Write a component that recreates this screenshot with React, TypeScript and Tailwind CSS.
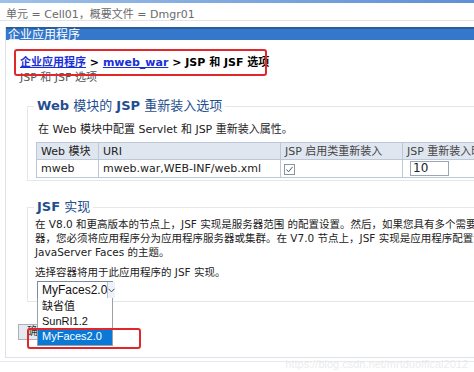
import React from 'react';

// WebSphere console: enterprise app > JSP and JSF options page

const font = "font-['DejaVu_Sans','Noto_Sans_CJK_SC',sans-serif]";

function Legend({ latin, cjk }: { latin: string[]; cjk: string[] }) {
  return (
    <legend className="ml-[6px] px-[3px] text-[13px] leading-[18px] text-[#1f4f8f]">
      {latin.map((l, i) => (
        <span key={i}>
          <span className="font-bold">{l}</span>
          {cjk[i] ? <span className="font-normal"> {cjk[i]}</span> : null}
          {i < latin.length - 1 ? ' ' : ''}
        </span>
      ))}
    </legend>
  );
}

export default function App() {
  return (
    <div className={`w-[474px] h-[372px] overflow-hidden bg-white relative ${font}`}>
      {/* top strip */}
      <div className="h-[3px] bg-gradient-to-r from-[#9fc0e8] to-[#5f90d4]" />
      <div className="h-[18px] pt-[6px] pl-[6px] text-[11px] leading-[12px] text-[#6a6a6a] whitespace-nowrap border-b border-[#dfe4ea]">
        单元 = Cell01，概要文件 = Dmgr01
      </div>

      <div className="mt-[6px] ml-[5px] border-l border-b border-[#dde2e8] h-[331px] relative">
        {/* title bar */}
        <div className="h-[13px] border-t-2 border-[#2b5d9c] bg-[#3477cb] pl-[2px] text-[12px] leading-[12px] text-white whitespace-nowrap">
          企业应用程序
        </div>

        {/* breadcrumb */}
        <div className="mt-[16px] ml-[14px] text-[11px] leading-[14px] font-bold whitespace-nowrap text-black">
          <span className="text-[#1a2fd6] underline">企业应用程序</span>
          <span> &gt; </span>
          <span className="text-[#1a2fd6] underline">mweb_war</span>
          <span> &gt; JSP 和 JSF 选项</span>
        </div>
        <div className="absolute left-[8px] top-[22px] w-[253px] h-[27px] border-2 border-[#e0282c] rounded-[3px]" />
        <div className="mt-[2px] ml-[14px] text-[11px] leading-[12px] text-[#555]">JSP 和 JSF 选项</div>

        {/* JSP reload fieldset */}
        <fieldset className="mt-[13px] ml-[21px] w-[470px] border border-[#e4e8ee] pb-[2px]">
          <Legend latin={['Web', 'JSP']} cjk={['模块的', '重新装入选项']} />
          <div className="mt-[8px] ml-[10px] text-[11px] leading-[13px] text-[#222] whitespace-nowrap">
            在 Web 模块中配置 Servlet 和 JSP 重新装入属性。
          </div>
          <table className="mt-[6px] ml-[8px] w-[490px] table-fixed border-collapse text-[11px] leading-[13px] text-[#222] whitespace-nowrap">
            <colgroup>
              <col className="w-[62px]" />
              <col className="w-[182px]" />
              <col className="w-[122px]" />
              <col className="w-[124px]" />
            </colgroup>
            <thead>
              <tr className="bg-[#dfe6f0] h-[17px]">
                <td className="border border-[#bcc7d8] pl-[4px] overflow-hidden">Web 模块</td>
                <td className="border border-[#bcc7d8] pl-[4px]">URI</td>
                <td className="border border-[#bcc7d8] pl-[4px] text-[#444] overflow-hidden">JSP 启用类重新装入</td>
                <td className="border border-[#bcc7d8] pl-[4px] text-[#444] overflow-hidden">JSP 重新装入时间间隔</td>
              </tr>
            </thead>
            <tbody>
              <tr className="h-[18px]">
                <td className="border border-[#bcc7d8] pl-[4px]">mweb</td>
                <td className="border border-[#bcc7d8] pl-[4px]">mweb.war,WEB-INF/web.xml</td>
                <td className="border border-[#bcc7d8] pl-[3px]">
                  <span className="inline-flex w-[11px] h-[11px] border border-[#8a96a6] items-center justify-center align-middle bg-white">
                    <svg width="9" height="9" viewBox="0 0 9 9">
                      <path d="M1.5 4.5 L3.5 6.8 L7.6 1.8" fill="none" stroke="#555" strokeWidth="1" />
                    </svg>
                  </span>
                </td>
                <td className="border border-[#bcc7d8] pl-[7px]">
                  <span className="inline-block w-[39px] h-[15px] border border-[#9aa6b6] pl-[2px] leading-[13px] text-[12px] align-middle bg-white">
                    10
                  </span>
                </td>
              </tr>
            </tbody>
          </table>
        </fieldset>

        {/* JSF fieldset */}
        <fieldset className="mt-[17px] ml-[21px] w-[470px] h-[104px] border border-[#e4e8ee]">
          <Legend latin={['JSF']} cjk={['实现']} />
          <div className="mt-[1px] ml-[7px] text-[10.5px] leading-[14px] text-[#222] whitespace-nowrap">
            <div>在 V8.0 和更高版本的节点上，JSF 实现是服务器范围 的配置设置。然后，如果您具有多个需要不同 JSF 实现的应用程序</div>
            <div>器，您必须将应用程序分为应用程序服务器或集群。在 V7.0 节点上，JSF 实现是应用程序配置设置，请参阅</div>
            <div>JavaServer Faces 的主题。</div>
            <div className="mt-[6px]">选择容器将用于此应用程序的 JSF 实现。</div>
          </div>
          <div className="mt-[2px] ml-[9px] relative w-[76px] h-[18px] border border-[#7a8aa0] bg-white flex">
            <div className="flex-1 pl-[4px] text-[12px] leading-[16px] text-[#111] font-['Liberation_Sans',sans-serif]">MyFaces2.0</div>
            <div className="w-[13px] border-l border-[#b7c3d4] bg-[#eef2f8] flex items-center justify-center">
              <svg width="7" height="5" viewBox="0 0 7 5">
                <path d="M0.5 0.8 L3.5 3.8 L6.5 0.8" fill="none" stroke="#445" strokeWidth="1" />
              </svg>
            </div>
          </div>
        </fieldset>

        {/* buttons row (partly hidden by open list) */}
        <div className="mt-[22px] ml-[12px] w-[40px] h-[16px] border border-[#a9b0ba] bg-[#e6e9ee] text-[11px] leading-[14px] text-[#333] pl-[8px]">
          确定
        </div>

        {/* open select list */}
        <div className="absolute left-[31px] top-[271px] w-[76px] border border-[#9aa0a8] border-t-0 bg-white text-[11px] leading-[14px] text-[#111] font-['Liberation_Sans','Noto_Sans_CJK_SC',sans-serif]">
          <div className="pl-[4px] pt-[1px]">缺省值</div>
          <div className="pl-[4px] pt-[1px]">SunRI1.2</div>
          <div className="pl-[4px] h-[17px] leading-[17px] bg-[#0a78d6] text-white">MyFaces2.0</div>
        </div>
        <div className="absolute left-[21px] top-[301px] w-[114px] h-[21px] border-2 border-[#e0282c] rounded-[3px]" />
      </div>

      <div className="border-b border-[#e6e9ee] mt-[3px]" />
      <div className="absolute right-[6px] bottom-[2px] text-[11px] leading-[12px] text-[#ececec] whitespace-nowrap font-['Liberation_Sans',sans-serif]">
        https://blog.csdn.net/mrtduoffical2012
      </div>
    </div>
  );
}
